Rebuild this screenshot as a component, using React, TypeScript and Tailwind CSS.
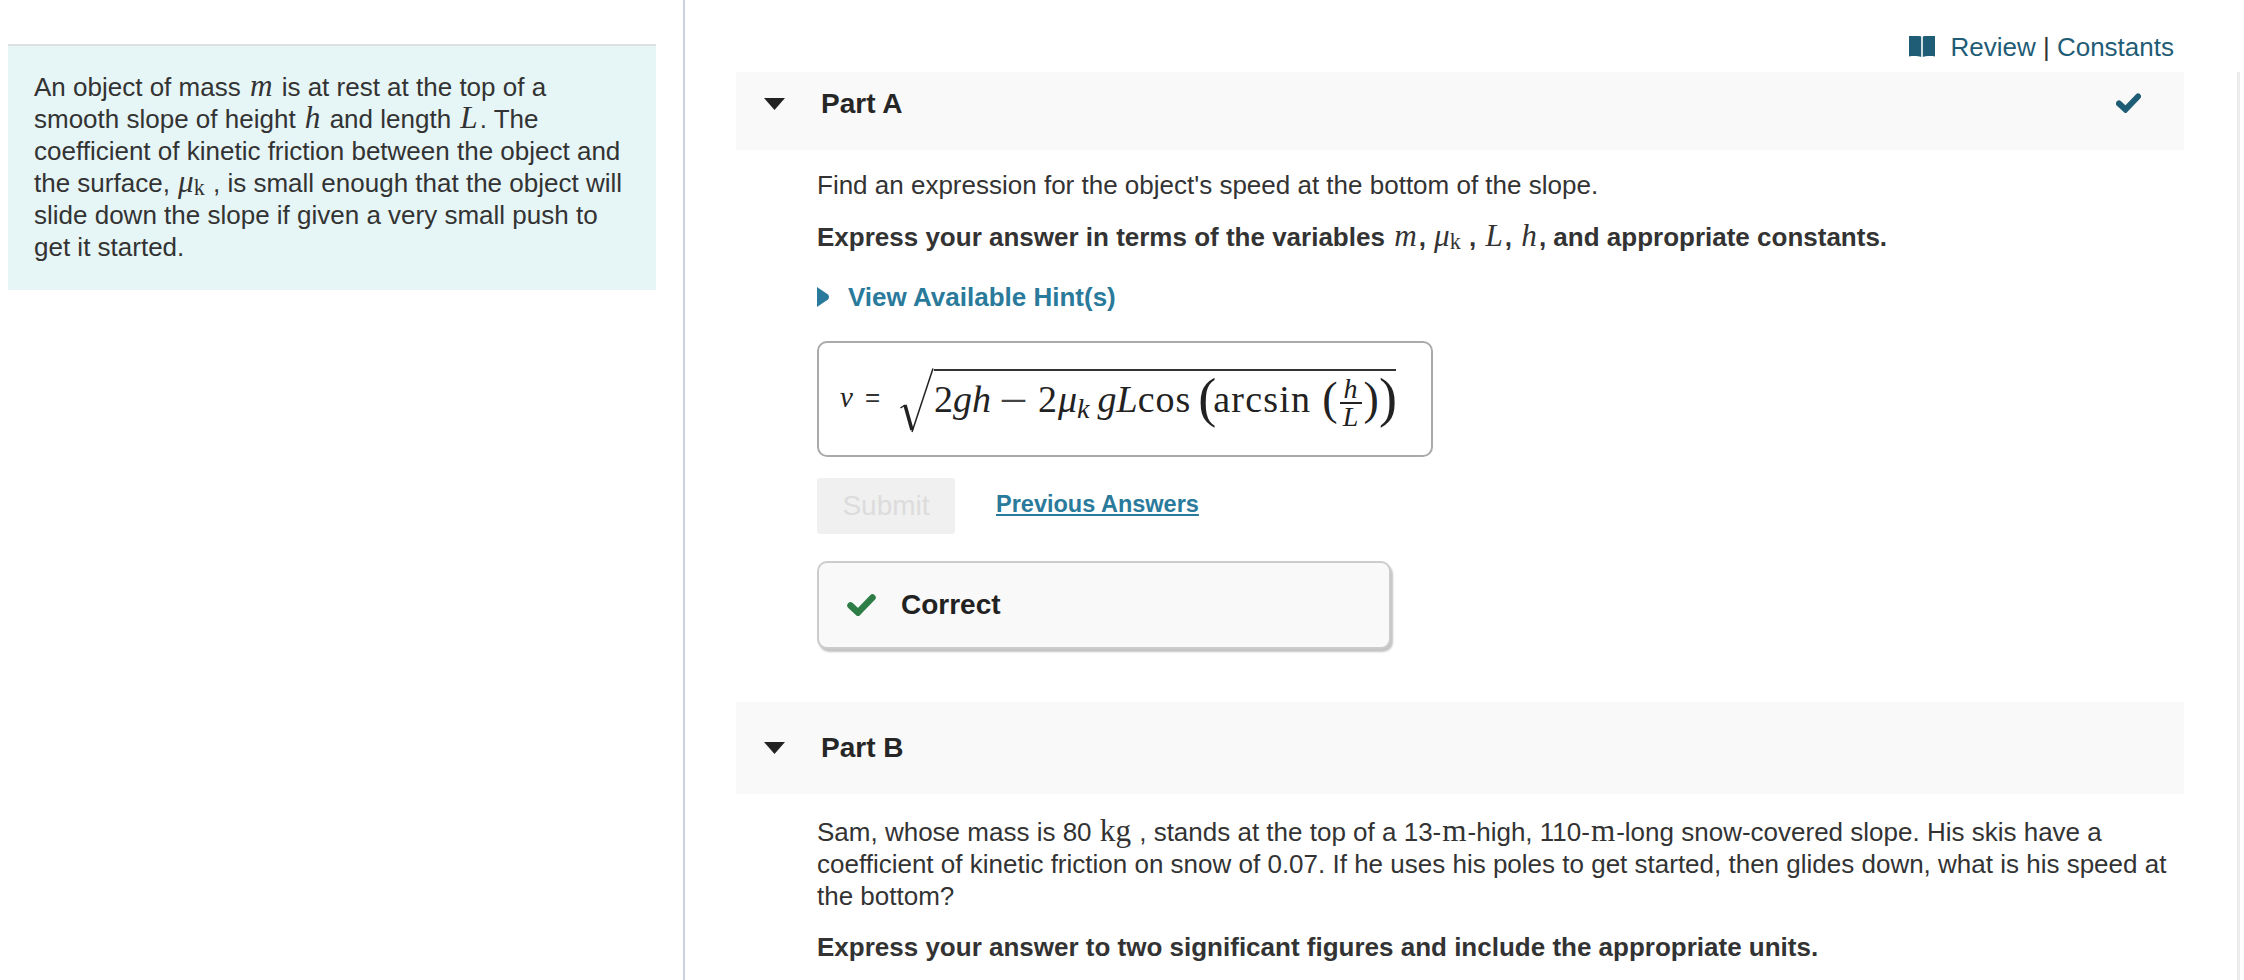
const SANS = "font-['Liberation_Sans',Arial,sans-serif]";

function M({ children }: { children: React.ReactNode }) {
  return (
    <span className="font-['Liberation_Serif',serif] italic font-normal text-[1.2em] leading-[0] mx-[2px]">
      {children}
    </span>
  );
}

function Mu() {
  return (
    <span className="font-['Liberation_Serif',serif] font-normal leading-[0] whitespace-nowrap mx-[1px]">
      <span className="italic text-[1.2em] leading-[0]">μ</span>
      <span className="text-[0.85em] leading-[0] align-[-3px]">k</span>
    </span>
  );
}

function Rm({ children }: { children: React.ReactNode }) {
  return (
    <span className="font-['Liberation_Serif',serif] font-normal text-[1.2em] leading-[0] mx-[1px]">{children}</span>
  );
}

function Triangle() {
  return (
    <svg width="21" height="12" viewBox="0 0 21 12" className="shrink-0">
      <path d="M0 0h21L10.5 12z" fill="#222" />
    </svg>
  );
}

function PartHeader({ label, height, top, check }: { label: string; height: string; top: string; check?: boolean }) {
  return (
    <div className={`flex items-start justify-between bg-[#f9f9f9] ${height}`}>
      <div className={`flex items-center pl-[28px] ${top}`}>
        <Triangle />
        <span className="ml-[36px] text-[28px] leading-[32px] font-bold text-[#262626]">{label}</span>
      </div>
      {check && (
        <svg width="25" height="20" viewBox="0 0 25 20" className="mt-[21px] mr-[43px]">
          <path d="M3 10.5l6.5 6L22 3.500" fill="none" stroke="#1f5c75" strokeWidth="6" strokeLinecap="round" />
        </svg>
      )}
    </div>
  );
}

function Formula() {
  return (
    <div className="flex items-start h-[112px] pl-[21px] pt-[24px] font-['Liberation_Serif',serif] text-[#222]">
      <span className="italic text-[29px] leading-[50px] w-[25px] mt-[5px]">v</span>
      <span className={`${SANS} text-[26px] leading-[50px] text-[#333] mt-[5px] w-[35px]`}>=</span>
      <svg width="34" height="66" viewBox="0 0 34 66" className="shrink-0">
        <path d="M0.500 41L5 38" fill="none" stroke="#222" strokeWidth="1.500" />
        <path d="M5 38L12 63" fill="none" stroke="#222" strokeWidth="3.500" />
        <path d="M12 65L33 1.500" fill="none" stroke="#222" strokeWidth="1.500" />
      </svg>
      <div className="mt-[2px] border-t-2 border-[#333] w-[462px] h-[50px] text-[38px] leading-[46px] whitespace-nowrap">
        <span>2</span>
        <span className="italic">gh</span>
        <span className="ml-[11px] mr-[13px] text-[46px] leading-none text-[#444] font-light">–</span>
        <span>2</span>
        <span className="italic ml-[1px]">μ</span>
        <span className="italic text-[28px] leading-none align-[-6px]">k</span>
        <span className="italic ml-[8px]">gL</span>
        <span className="tracking-[1px]">cos</span>
        <span className="text-[54px] ml-[7px] mr-[-3px] leading-none align-[-4px]">(</span>
        <span className="tracking-[1.2px]">arcsin</span>
        <span className="text-[46px] ml-[11px] leading-none align-[-2px]">(</span>
        <span className="inline-flex flex-col items-center italic text-[28px] leading-[26px] ml-[2px] mr-[2px] align-[14px]">
          <span className="border-b-2 border-[#222] px-[4px]">h</span>
          <span>L</span>
        </span>
        <span className="text-[46px] leading-none align-[-2px]">)</span>
        <span className="text-[54px] leading-none align-[-4px]">)</span>
      </div>
    </div>
  );
}

export default function App() {
  return (
    <div className={`flex w-[2244px] h-[980px] overflow-hidden bg-white text-[26px] leading-[32px] text-[#333] ${SANS}`}>
      <div className="w-[685px] shrink-0 border-r-2 border-[#c9d2de] pt-[44px] pl-[8px]">
        <div className="w-[648px] h-[246px] border-t-2 border-[#dfe0e3] bg-[#e6f5f6] pl-[26px] pr-[32px] pt-[25px]">
          An object of mass <M>m</M> is at rest at the top of a smooth slope of height <M>h</M> and length <M>L</M>. The
          coefficient of kinetic friction between the object and the surface, <Mu /> , is small enough that the object
          will slide down the slope if given a very small push to get it started.
        </div>
      </div>

      <div className="flex-1 pl-[51px]">
        <div className="w-[1448px]">
          <div className="flex justify-end items-start h-[72px] pt-[31px] pr-[10px] text-[#1f5c75]">
            <svg width="26" height="21" viewBox="0 0 26 21" className="mt-[5px] mr-[15px]">
              <path d="M0 0c4-.6 9-.6 12.200.6V21C9 19.800 4 19.800 0 20.400zM26 0c-4-.6-9-.6-12.200.6V21C17 19.800 22 19.800 26 20.400z" fill="#1f5c75" />
            </svg>
            <span>
              Review <span className="text-[#333]">|</span> Constants
            </span>
          </div>

          <PartHeader label="Part A" height="h-[78px]" top="pt-[16px]" check />
          <div className="pl-[81px]">
            <p className="mt-[19px]">Find an expression for the object's speed at the bottom of the slope.</p>
            <p className="mt-[20px] font-bold">
              Express your answer in terms of the variables <M>m</M>, <Mu /> , <M>L</M>, <M>h</M>, and appropriate constants.
            </p>
            <div className="mt-[28px] flex items-center font-bold text-[#2a7a9b]">
              <svg width="13" height="20" viewBox="0 0 13 20" className="mr-[18px]">
                <path d="M0 0l11 7.500Q13 10 11 12.500L0 20z" fill="#2a7a9b" />
              </svg>
              View Available Hint(s)
            </div>
            <div className="mt-[28px] w-[616px] h-[116px] rounded-[10px] border-2 border-[#aaaaaa]">
              <Formula />
            </div>
            <div className="mt-[21px] flex items-center">
              <button className="w-[138px] h-[56px] rounded-[3px] bg-[#f0f0f0] text-[28px] text-[#dcdcdc]">Submit</button>
              <a className="ml-[41px] mb-[4px] text-[23.5px] font-bold text-[#2a7a9b] underline">Previous Answers</a>
            </div>
            <div className="mt-[27px] flex items-center w-[574px] h-[88px] rounded-[10px] border-2 border-[#cccccc] bg-[#f9f9f9] shadow-[2px_3px_2px_#c4c4c4] pl-[28px]">
              <svg width="29" height="22" viewBox="0 0 29 22" className="mr-[25px] mb-[1px]">
                <path d="M3.500 11.500l7.500 7L25.500 3.500" fill="none" stroke="#2e7d46" strokeWidth="6.500" strokeLinecap="round" />
              </svg>
              <span className="font-bold text-[28px] text-[#222]">Correct</span>
            </div>
          </div>

          <div className="mt-[53px]">
            <PartHeader label="Part B" height="h-[92px]" top="pt-[30px]" />
          </div>
          <div className="pl-[81px]">
            <p className="mt-[22px]">
              Sam, whose mass is 80 <Rm>kg</Rm> , stands at the top of a 13-<Rm>m</Rm>-high, 110-<Rm>m</Rm>-long snow-covered slope. His skis have a coefficient of kinetic friction on snow of 0.07. If he uses his poles to get started, then glides down, what is his speed at the bottom?
            </p>
            <p className="mt-[19px] font-bold">Express your answer to two significant figures and include the appropriate units.</p>
          </div>
        </div>
      </div>

      <div className="shrink-0 w-[7px] mt-[72px] border-l-[3px] border-[#ececec]" />
    </div>
  );
}
